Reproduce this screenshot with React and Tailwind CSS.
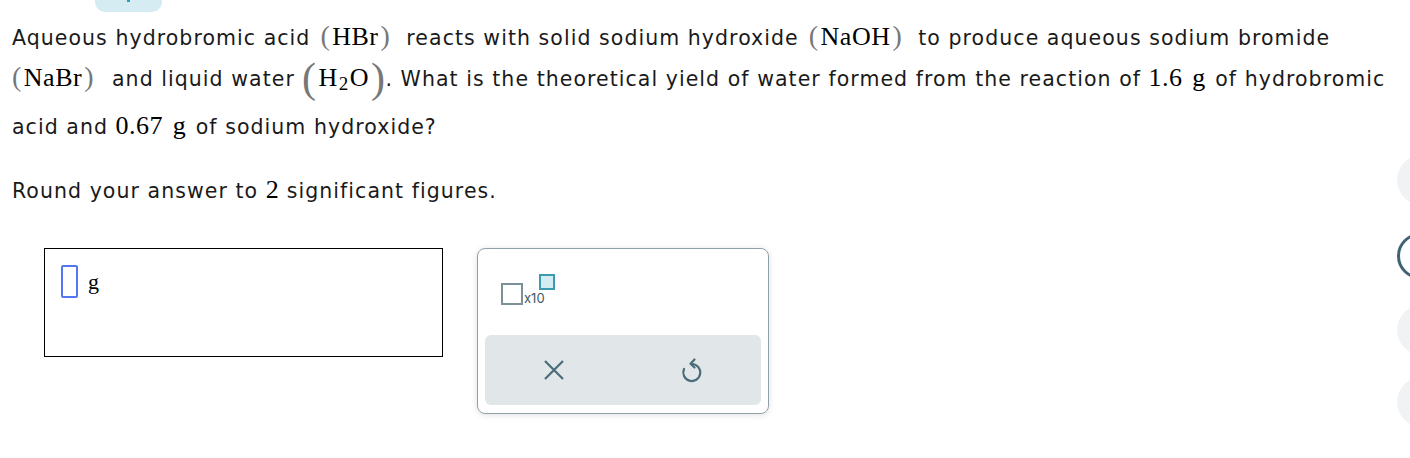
import React from 'react';

const M = ({ children, className = 'mx-0' }) => (
  <span className={`inline-block font-['Liberation_Serif',serif] text-[26px] leading-none tracking-[0.5px] text-black ${className}`}>{children}</span>
);

const P = ({ children, big }) => (
  <span className={`text-[#777] font-light ${big ? 'text-[42px] leading-none align-[-6px]' : 'text-[28px] leading-none'}`}>{children}</span>
);

function Chem({ children, className = 'ml-[10px] mr-[16px]' }) {
  return (
    <M className={className}>
      <P>(</P>
      <span className="px-[2px]">{children}</span>
      <P>)</P>
    </M>
  );
}

function SideTools() {
  return (
    <div className="absolute left-[1397px] top-[155px] flex flex-col">
      <div className="w-[50px] h-[50px] rounded-full bg-[#f1f2f4]" />
      <div className="mt-[28px] w-[46px] h-[46px] rounded-full border-[3px] border-[#3f6473] bg-white" />
      <div className="mt-[26px] w-[50px] h-[50px] rounded-full bg-[#f1f2f4]" />
      <div className="mt-[22px] w-[50px] h-[50px] rounded-full bg-[#f1f2f4]" />
    </div>
  );
}

export default function App() {
  return (
    <div className="relative w-[1410px] h-[458px] bg-white overflow-hidden font-['DejaVu_Sans',sans-serif] text-[#1a1a1a]">
      {/* top tab */}
      <div className="ml-[95px] w-[67px] h-[12px] rounded-b-[10px] bg-[#d4ecf2] flex justify-center">
        <div className="w-[3px] h-[2px] bg-[#2f9ac0]" />
      </div>

      <div className="pl-[12px] text-[20.5px] tracking-[1.05px]">
        <div className="h-[39px] leading-[39px] mt-[7px] whitespace-nowrap">
          Aqueous hydrobromic acid<Chem>HBr</Chem>reacts with solid sodium hydroxide<Chem>NaOH</Chem>to produce aqueous sodium bromide
        </div>
        <div className="h-[39px] leading-[39px] -mt-[1px] whitespace-nowrap">
          <Chem className="mr-[18px]">NaBr</Chem>and liquid water
          <M className="ml-[7px]">
            <P big>(</P>
            <span className="px-[2px]">H<sub className="text-[19px] relative top-[4px] px-[1px]">2</sub>O</span>
            <P big>)</P>
          </M>
          . What is the theoretical yield of water formed from the reaction of <M>1.6</M> <M className="mx-[2px]">g</M> of hydrobromic
        </div>
        <div className="h-[39px] leading-[39px] mt-[12px] whitespace-nowrap">
          acid and <M>0.67</M> <M className="mx-[2px]">g</M> of sodium hydroxide?
        </div>
        <div className="h-[39px] leading-[39px] mt-[25px] whitespace-nowrap">
          Round your answer to <M>2</M> significant figures.
        </div>
      </div>

      <div className="flex pl-[44px] mt-[37px] gap-[34px]">
        <div className="w-[399px] h-[109px] border border-black pt-[16px] pl-[16px] flex items-center self-start">
          <div className="flex items-center self-start">
            <div className="w-[17px] h-[33px] border-2 border-[#5276f4] rounded-[2px]" />
            <span className="ml-[10px] font-['Liberation_Serif',serif] text-[22px] text-black">g</span>
          </div>
        </div>

        <div className="w-[292px] h-[166px] border border-[#8ea1a9] rounded-[8px] shadow-[0_1px_6px_rgba(0,0,0,0.12)] px-[7px] pb-[8px] flex flex-col">
          <div className="h-[86px] pl-[16px] pt-[25px]">
            <div className="flex items-start">
              <div className="mt-[9px] w-[22px] h-[22px] border-2 border-[#7d9199]" />
              <span className="mt-[17px] ml-[1px] text-[13px] leading-[14px] text-[#3e5a66] font-['Inter',sans-serif]">x10</span>
              <div className="-ml-[6px] w-[16px] h-[16px] border-2 border-[#3d9ab3] bg-[#d4edf3]" />
            </div>
          </div>
          <div className="flex-1 rounded-[6px] bg-[#e1e6e9] grid grid-cols-2">
            <div className="flex items-center justify-center">
              <svg width="20" height="20" viewBox="0 0 20 20" fill="none" stroke="#4a6b78" strokeWidth="2.2">
                <path d="M1 1L19 19M19 1L1 19" />
              </svg>
            </div>
            <div className="flex items-center justify-center">
              <svg width="24" height="28" viewBox="0 0 24 28" fill="none" stroke="#4a6b78" strokeWidth="2.2" strokeLinecap="round" strokeLinejoin="round">
                <path d="M12 8A8.5 8.5 0 1 1 4 13" />
                <path d="M14.5 3.5L10.5 7.8L14.5 11.5" />
              </svg>
            </div>
          </div>
        </div>
      </div>

      <SideTools />
    </div>
  );
}
